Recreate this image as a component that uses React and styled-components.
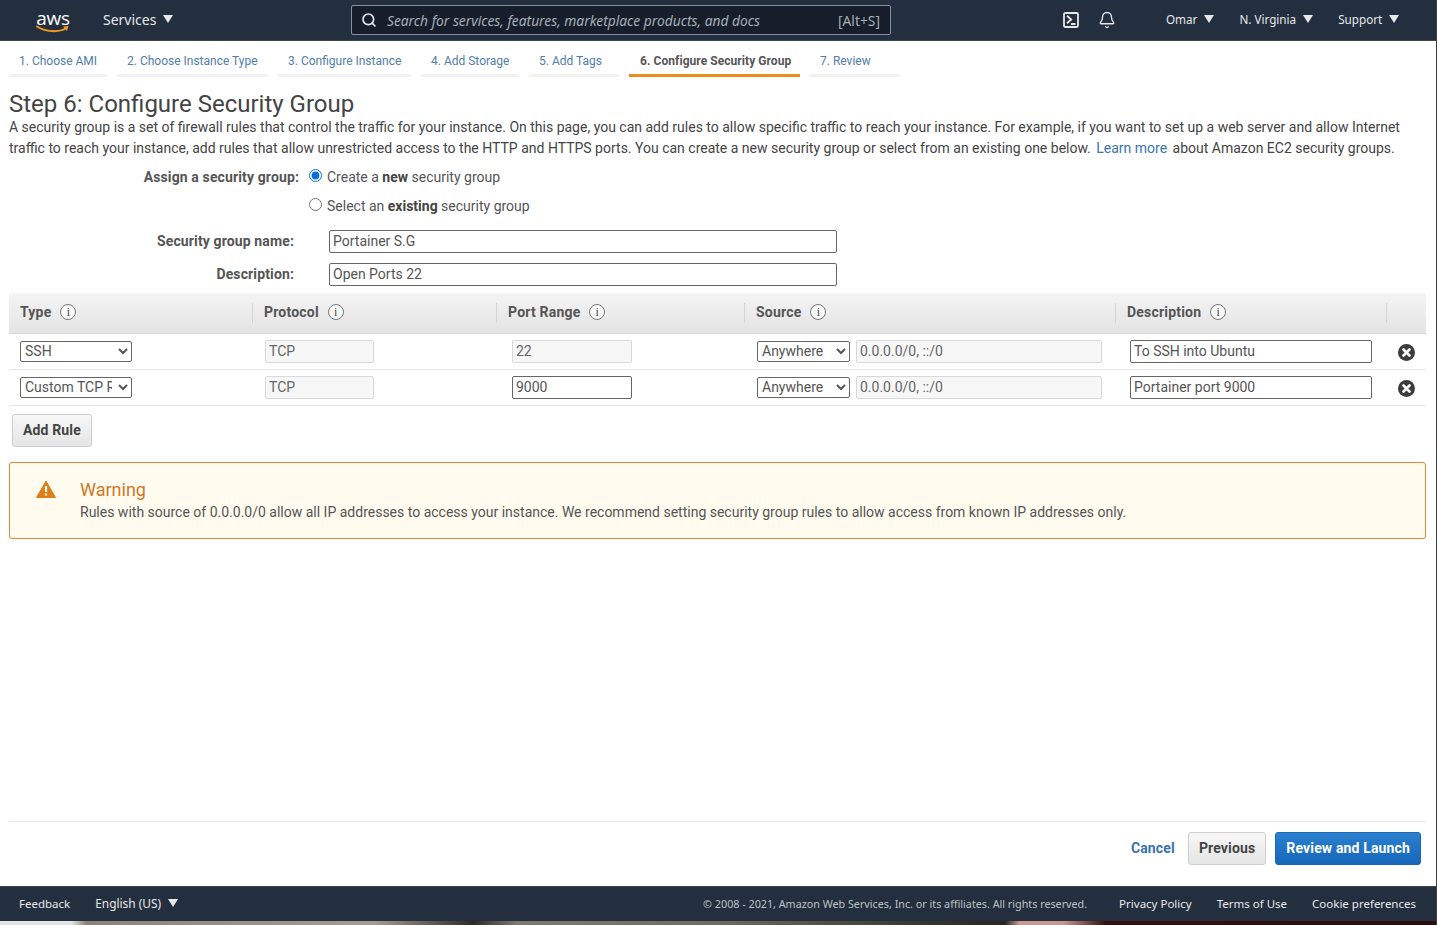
import styled, { createGlobalStyle } from 'styled-components';
import { Search, Bell } from 'lucide-react';

const steps = [
  { label: '1. Choose AMI', width: 98 },
  { label: '2. Choose Instance Type', width: 151 },
  { label: '3. Configure Instance', width: 133 },
  { label: '4. Add Storage', width: 98 },
  { label: '5. Add Tags', width: 90 },
  { label: '6. Configure Security Group', width: 171, active: true },
  { label: '7. Review', width: 90 },
];

const columns = ['Type', 'Protocol', 'Port Range', 'Source', 'Description'];

const rules = [
  { type: 'SSH', protocol: 'TCP', port: '22', portLocked: true, description: 'To SSH into Ubuntu' },
  { type: 'Custom TCP Rule', protocol: 'TCP', port: '9000', description: 'Portainer port 9000' },
];

const GlobalStyle = createGlobalStyle`
  html, body {
    margin: 0;
    padding: 0;
    background: #fff;
  }
  body {
    font-family: Roboto, "Liberation Sans", sans-serif;
    font-size: 14px;
    color: #444;
  }
  * {
    box-sizing: border-box;
  }
`;

const Page = styled.div`
  display: flex;
  flex-direction: column;
  height: 925px;
  overflow: hidden;
  border-right: 1px solid #3a3f45;
`;

const Header = styled.header`
  display: flex;
  align-items: center;
  flex: none;
  height: 41px;
  padding-left: 36px;
  background: #232f3e;
  border-bottom: 1px solid #3c4653;
  color: #e6e8ea;
  font-family: "Noto Sans", sans-serif;
`;

const Logo = styled.div`
  position: relative;
  width: 34px;
  height: 30px;
  margin-right: 33px;
  color: #fff;
  font-family: "Open Sans", sans-serif;
  font-size: 19px;
  line-height: 26px;
  letter-spacing: -0.3px;
  text-align: center;
  svg {
    position: absolute;
    left: 0;
    top: 20px;
  }
`;

const NavText = styled.span`
  display: flex;
  align-items: center;
  gap: 6.5px;
  padding-bottom: 2px;
  font-size: ${(p) => p.$size || 11.7}px;
  margin-left: ${(p) => p.$left || 0}px;
`;

const Caret = styled.i`
  display: inline-block;
  width: 0;
  height: 0;
  border-left: 5px solid transparent;
  border-right: 5px solid transparent;
  border-top: 8px solid #e6e8ea;
`;

const SearchBox = styled.div`
  display: flex;
  align-items: center;
  width: 540px;
  height: 30px;
  margin-left: 178px;
  padding: 0 10px 0 9px;
  background: #161e2b;
  border: 1px solid #87919c;
  border-radius: 2px;
  color: #a5adb5;
  font-size: 13.8px;
  svg {
    color: #e6e8ea;
    margin-right: 10px;
    flex: none;
  }
  em {
    flex: 1;
  }
`;

const HeaderIcons = styled.div`
  display: flex;
  align-items: center;
  gap: 19px;
  margin-left: 172px;
`;

const HeaderMenus = styled.div`
  display: flex;
  align-items: center;
  gap: 25.5px;
  margin-left: 50px;
`;

const Tabs = styled.nav`
  display: flex;
  flex: none;
  gap: 10px;
  height: 36px;
  margin-left: 9px;
`;

const Tab = styled.div`
  width: ${(p) => p.$width}px;
  padding: 13px 0 0 ${(p) => (p.$active ? 11 : 10)}px;
  border-bottom: 3px solid ${(p) => (p.$active ? '#ec8c1c' : '#f1f1f1')};
  color: ${(p) => (p.$active ? '#555' : '#4f7ea8')};
  font-size: 12px;
  font-weight: ${(p) => (p.$active ? 700 : 400)};
  letter-spacing: ${(p) => (p.$active ? 0.06 : 0)}px;
  line-height: 15px;
  white-space: nowrap;
`;

const Main = styled.main`
  display: flex;
  flex: 1;
  flex-direction: column;
  padding: 0 10px 0 9px;
`;

const Title = styled.h1`
  margin: 14px 0 0;
  font-size: 24px;
  font-weight: 400;
  line-height: 26px;
  color: #444;
`;

const Intro = styled.p`
  margin: 0;
  font-size: 14px;
  line-height: 21px;
  white-space: nowrap;
  a {
    color: #3b73af;
    margin: 0 2px;
  }
`;

const FormRow = styled.div`
  display: flex;
  align-items: center;
  height: ${(p) => p.$height}px;
  margin-top: ${(p) => p.$top || 0}px;
`;

const FormLabel = styled.label`
  flex: none;
  width: ${(p) => p.$width}px;
  padding-bottom: ${(p) => p.$lift || 0}px;
  font-weight: 700;
  letter-spacing: 0.13px;
  color: #555;
  text-align: right;
`;

const Radio = styled.input.attrs({ type: 'radio' })`
  width: 13px;
  height: 13px;
  margin: 0 5px 2px 10px;
  accent-color: #0a6fdc;
`;

const RadioText = styled.span`
  color: #555;
  b {
    color: #444;
  }
`;

const TextInput = styled.input`
  height: ${(p) => p.$height || 23}px;
  width: ${(p) => p.$width}px;
  margin-left: ${(p) => p.$left || 0}px;
  padding: 0 3px 2px;
  background: ${(p) => (p.disabled ? '#f7f7f7' : '#fff')};
  border: 1px solid ${(p) => (p.disabled ? '#d9d9d9' : '#666')};
  border-radius: 2px;
  color: #555;
  font-family: inherit;
  font-size: 14px;
  &:disabled {
    color: #666;
  }
`;

const Select = styled.select`
  height: 21px;
  width: ${(p) => p.$width}px;
  margin-left: ${(p) => p.$left || 0}px;
  padding: 0 3px 2px 0;
  background: #fff;
  border: 1px solid #666;
  border-radius: 2px;
  color: #555;
  font-family: inherit;
  font-size: 14px;
`;

const RuleGrid = styled.div`
  display: grid;
  grid-template-columns: 244px 244px 248px 371px 271px 39px;
  align-items: center;
`;

const TableHead = styled(RuleGrid)`
  height: 41px;
  margin-top: 2px;
  background: linear-gradient(#f4f4f4, #e4e4e4);
  border-bottom: 1px solid #d8d8d8;
`;

const HeadCell = styled.div`
  display: flex;
  align-items: center;
  gap: 9px;
  height: 20px;
  padding: 0 0 2px 11px;
  border-right: 1px solid #d5d5d5;
  font-weight: 700;
  letter-spacing: 0.2px;
  color: #555;
`;

const InfoMark = styled.span`
  display: inline-flex;
  align-items: center;
  justify-content: center;
  width: 16px;
  height: 16px;
  border: 1px solid #777;
  border-radius: 50%;
  background: #fafafa;
  font-family: "Liberation Serif", serif;
  font-size: 12px;
  font-weight: 400;
  color: #444;
`;

const RuleRow = styled(RuleGrid)`
  height: 36px;
  border-bottom: 1px solid #e6e6e6;
`;

const Cell = styled.div`
  display: flex;
  align-items: center;
  padding-left: ${(p) => p.$left}px;
`;

const RemoveButton = styled.button`
  display: flex;
  align-items: center;
  padding: 0;
  margin: 2px 0 0 11px;
  background: none;
  border: 0;
`;

const Button = styled.button`
  height: 33px;
  padding: 0 10px 2px;
  background: ${(p) =>
    p.$primary ? 'linear-gradient(#2b80cf, #1667ba)' : 'linear-gradient(#f7f7f7, #e5e5e5)'};
  border: 1px solid ${(p) => (p.$primary ? '#1b66b0' : '#cfcfcf')};
  border-radius: 3px;
  color: ${(p) => (p.$primary ? '#fff' : '#444')};
  font-family: inherit;
  font-size: 14px;
  font-weight: 700;
  letter-spacing: 0.15px;
`;

const AddRule = styled(Button)`
  align-self: flex-start;
  margin: 8px 0 0 3px;
`;

const Warning = styled.section`
  display: flex;
  height: 77px;
  margin-top: 15px;
  padding: 16px 0 0 26px;
  background: #fffbef;
  border: 1px solid #d98a35;
  border-radius: 3px;
  svg {
    flex: none;
    margin: 1px 24px 0 0;
  }
`;

const WarningTitle = styled.div`
  font-size: 18px;
  line-height: 21px;
  color: #d0781f;
`;

const WarningText = styled.div`
  margin-top: 2px;
  line-height: 20px;
  color: #555;
`;

const Actions = styled.div`
  display: flex;
  align-items: flex-start;
  justify-content: flex-end;
  gap: 9px;
  flex: none;
  height: 65px;
  margin-top: auto;
  padding: 10px 5px 0 0;
  border-top: 1px solid #eaeaea;
`;

const CancelLink = styled.a`
  margin-right: 4px;
  color: #3b73af;
  font-weight: 700;
  letter-spacing: 0.15px;
  line-height: 33px;
`;

const Footer = styled.footer`
  display: flex;
  align-items: center;
  flex: none;
  height: 35px;
  padding: 0 20px 0 19px;
  background: #232f3e;
  border-top: 1px solid #3c4653;
  color: #e6e8ea;
  font-family: "Noto Sans", sans-serif;
  font-size: 11.5px;
`;

const FooterLabel = styled.span`
  padding-bottom: 1px;
`;

const Copyright = styled.span`
  margin-left: auto;
  margin-right: 32px;
  font-size: 10.75px;
  color: #bcc2c8;
`;

const FooterLinks = styled.div`
  display: flex;
  gap: 25px;
  padding-bottom: 1px;
`;

const PhotoStrip = styled.div`
  flex: none;
  height: 4px;
  background: linear-gradient(
    90deg,
    #e4e4e4 0,
    #e4e4e4 5%,
    #8a8378 6%,
    #a39d92 26%,
    #2e2a26 33%,
    #7d7a72 36%,
    #6e6c62 50%,
    #35342c 65%,
    #2a2622 70%,
    #c79a90 71%,
    #c79a90 74%,
    #35100c 77%,
    #2a0e0c 100%
  );
`;

const AwsLogo = () => (
  <Logo>
    aws
    <svg width="34" height="9" viewBox="0 0 34 9">
      <path d="M1 1.5C9 7 23 7.5 30 3.5" fill="none" stroke="#f09a21" strokeWidth="2" strokeLinecap="round" />
      <path d="M27 1.5 32.5 1 31 6Z" fill="#f09a21" />
    </svg>
  </Logo>
);

const ShellIcon = () => (
  <svg width="16" height="16" viewBox="0 0 16 16" fill="none" stroke="#e6e8ea" strokeWidth="1.8">
    <rect x="1" y="1" width="14" height="14" rx="1.5" />
    <path d="M4 3.8 8.2 7.5 4 11.2M8 12h4.5" />
  </svg>
);

const RemoveIcon = () => (
  <svg width="17" height="17" viewBox="0 0 17 17">
    <circle cx="8.5" cy="8.5" r="8.5" fill="#3c3c3c" />
    <path d="M5.5 5.5l6 6M11.5 5.5l-6 6" stroke="#fff" strokeWidth="2.6" strokeLinecap="round" />
  </svg>
);

const WarningIcon = () => (
  <svg width="20" height="18" viewBox="0 0 20 18">
    <path d="M10 1 19.5 17.5H.5Z" fill="#d9801c" stroke="#d9801c" strokeLinejoin="round" />
    <path d="M10 6v6M10 13.5v2" stroke="#fff8ea" strokeWidth="2.2" />
  </svg>
);

const App = () => {
  return (
    <Page>
      <GlobalStyle />
      <Header>
        <AwsLogo />
        <NavText $size={14}>
          Services <Caret />
        </NavText>
        <SearchBox>
          <Search size={16} strokeWidth={2.5} />
          <em>Search for services, features, marketplace products, and docs</em>
          <span>[Alt+S]</span>
        </SearchBox>
        <HeaderIcons>
          <ShellIcon />
          <Bell size={18} strokeWidth={1.8} />
        </HeaderIcons>
        <HeaderMenus>
          <NavText>Omar <Caret /></NavText>
          <NavText>N. Virginia <Caret /></NavText>
          <NavText>Support <Caret /></NavText>
        </HeaderMenus>
      </Header>

      <Tabs>
        {steps.map((step) => (
          <Tab key={step.label} $width={step.width} $active={step.active}>
            {step.label}
          </Tab>
        ))}
      </Tabs>

      <Main>
        <Title>Step 6: Configure Security Group</Title>
        <Intro>
          A security group is a set of firewall rules that control the traffic for your instance. On this page, you can add rules to allow specific traffic to reach your instance. For example, if you want to set up a web server and allow Internet
          <br />
          traffic to reach your instance, add rules that allow unrestricted access to the HTTP and HTTPS ports. You can create a new security group or select from an existing one below. <a>Learn more</a> about Amazon EC2 security groups.
        </Intro>

        <FormRow $height={29} $top={3}>
          <FormLabel $width={290}>Assign a security group:</FormLabel>
          <Radio name="assign" defaultChecked />
          <RadioText>Create a <b>new</b> security group</RadioText>
        </FormRow>
        <FormRow $height={29}>
          <FormLabel $width={290} />
          <Radio name="assign" />
          <RadioText>Select an <b>existing</b> security group</RadioText>
        </FormRow>
        <FormRow $height={33} $top={5}>
          <FormLabel $width={285} $lift={2}>Security group name:</FormLabel>
          <TextInput $width={508} $left={35} defaultValue="Portainer S.G" />
        </FormRow>
        <FormRow $height={33}>
          <FormLabel $width={285} $lift={2}>Description:</FormLabel>
          <TextInput $width={508} $left={35} defaultValue="Open Ports 22" />
        </FormRow>

        <TableHead>
          {columns.map((col) => (
            <HeadCell key={col}>
              {col} <InfoMark>i</InfoMark>
            </HeadCell>
          ))}
        </TableHead>
        {rules.map((rule) => (
          <RuleRow key={rule.description}>
            <Cell $left={11}>
              <Select $width={112} defaultValue={rule.type}>
                <option>SSH</option>
                <option>Custom TCP Rule</option>
              </Select>
            </Cell>
            <Cell $left={12}>
              <TextInput $width={109} disabled value={rule.protocol} readOnly />
            </Cell>
            <Cell $left={15}>
              <TextInput $width={120} disabled={rule.portLocked} defaultValue={rule.port} />
            </Cell>
            <Cell $left={12}>
              <Select $width={93}>
                <option>Anywhere</option>
              </Select>
              <TextInput $width={246} $left={6} disabled value="0.0.0.0/0, ::/0" readOnly />
            </Cell>
            <Cell $left={14}>
              <TextInput $width={242} defaultValue={rule.description} />
            </Cell>
            <RemoveButton aria-label="Remove rule">
              <RemoveIcon />
            </RemoveButton>
          </RuleRow>
        ))}

        <AddRule>Add Rule</AddRule>

        <Warning>
          <WarningIcon />
          <div>
            <WarningTitle>Warning</WarningTitle>
            <WarningText>
              Rules with source of 0.0.0.0/0 allow all IP addresses to access your instance. We recommend setting security group rules to allow access from known IP addresses only.
            </WarningText>
          </div>
        </Warning>

        <Actions>
          <CancelLink>Cancel</CancelLink>
          <Button>Previous</Button>
          <Button $primary>Review and Launch</Button>
        </Actions>
      </Main>

      <Footer>
        <FooterLabel>Feedback</FooterLabel>
        <NavText $size={11.9} $left={25}>English (US) <Caret /></NavText>
        <Copyright>© 2008 - 2021, Amazon Web Services, Inc. or its affiliates. All rights reserved.</Copyright>
        <FooterLinks>
          <span>Privacy Policy</span>
          <span>Terms of Use</span>
          <span>Cookie preferences</span>
        </FooterLinks>
      </Footer>
      <PhotoStrip />
    </Page>
  );
};

export default App;
